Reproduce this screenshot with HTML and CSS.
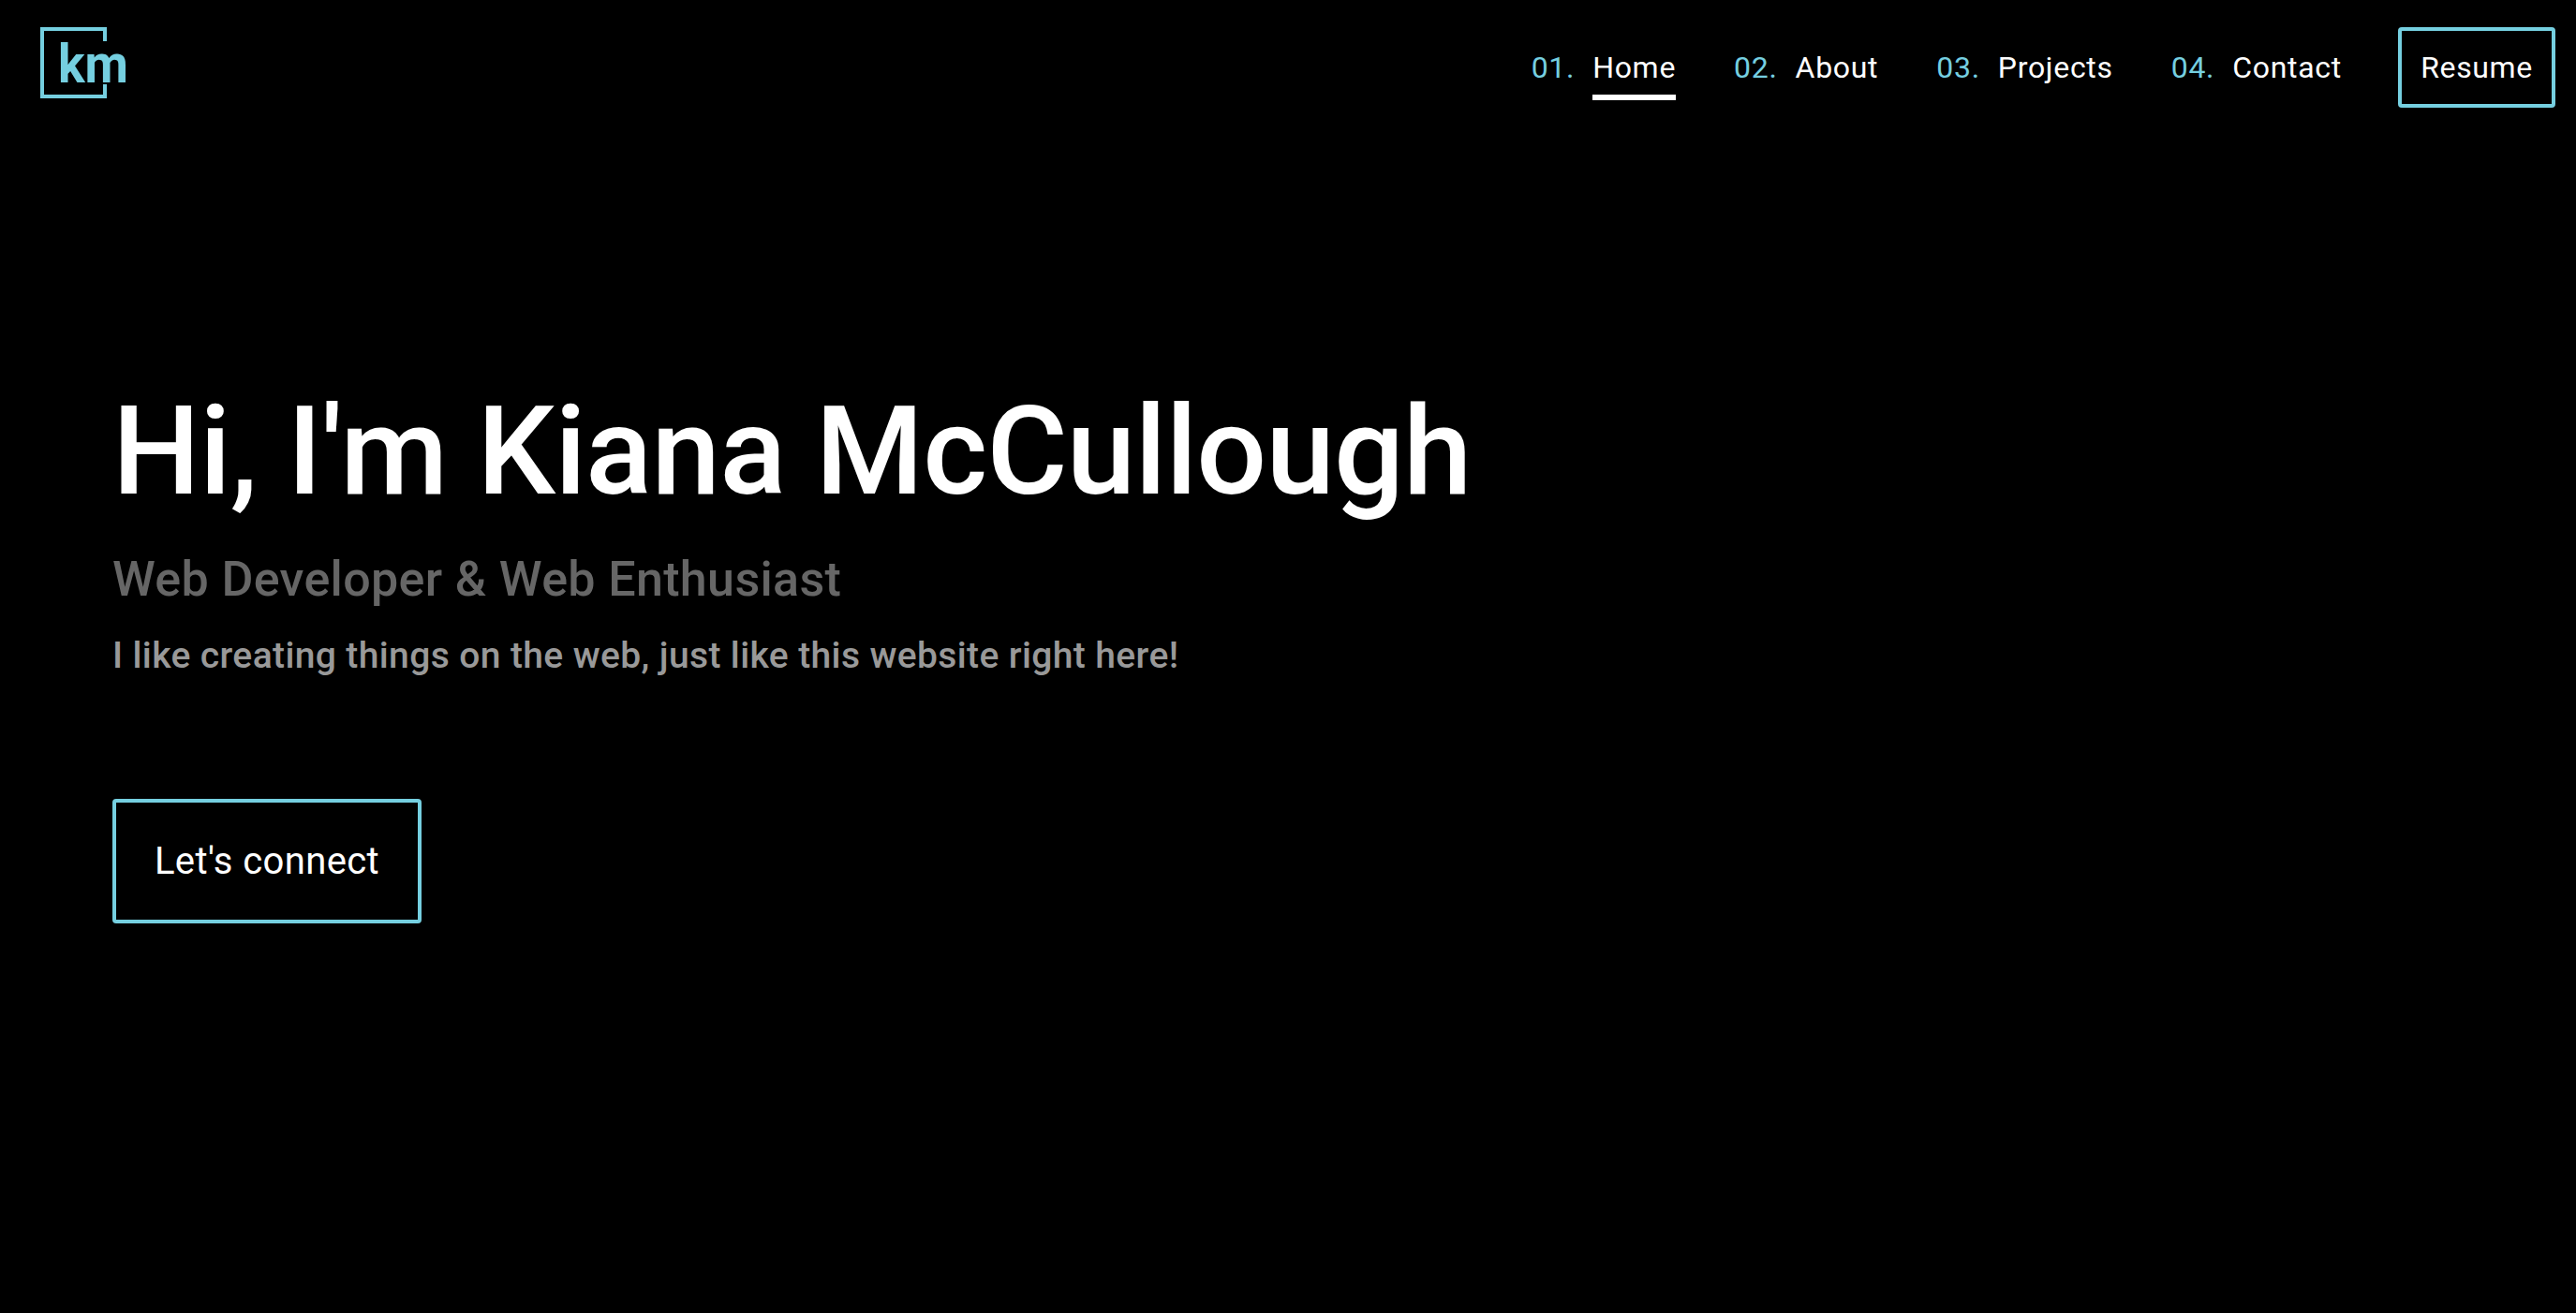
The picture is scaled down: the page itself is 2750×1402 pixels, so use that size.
FILE: index.html
```html
<!DOCTYPE html>
<html lang="en">
<head>
  <meta charset="UTF-8">
  <meta name="viewport" content="width=device-width, initial-scale=1.0">
  <title>Kiana McCullough</title>
  <link rel="stylesheet" href="styles.css">
</head>
<body>
  <header class="navbar">
    <a class="logo" href="#" aria-label="Home">
      <svg width="110" height="80" viewBox="0 0 110 80">
        <path d="M69 15V2H2V74H69V61" fill="none" stroke="#75cfe0" stroke-width="4"/>
        <text x="19" y="59" textLength="75" lengthAdjust="spacingAndGlyphs" class="logo-text">km</text>
      </svg>
    </a>
    <nav class="nav-links">
      <a class="nav-link" href="#"><span class="num">01.</span><span class="label active">Home</span></a>
      <a class="nav-link" href="#"><span class="num">02.</span><span class="label">About</span></a>
      <a class="nav-link" href="#"><span class="num">03.</span><span class="label">Projects</span></a>
      <a class="nav-link" href="#"><span class="num">04.</span><span class="label">Contact</span></a>
      <a class="button resume" href="#">Resume</a>
    </nav>
  </header>

  <main class="hero">
    <h1>Hi, I'm Kiana McCullough</h1>
    <h2>Web Developer &amp; Web Enthusiast</h2>
    <p>I like creating things on the web, just like this website right here!</p>
    <a class="button connect" href="#">Let's connect</a>
  </main>
</body>
</html>
```

FILE: styles.css
```css
html, body {
  height: 100%;
}
body {
  margin: 0;
  background-color: #000;
  color: #fff;
  font-family: Roboto, "Noto Sans", sans-serif;
}
a {
  color: inherit;
  text-decoration: none;
}

/* Top bar */
.navbar {
  display: flex;
  justify-content: space-between;
  align-items: flex-start;
  padding: 29px 22px 0 43px;
}
.logo {
  display: block;
  height: 80px;
}
.logo-text {
  font-family: Roboto, sans-serif;
  font-size: 57px;
  font-weight: 700;
  fill: #75cfe0;
}
.nav-links {
  display: flex;
  align-items: flex-start;
}
.nav-link {
  display: flex;
  gap: 19px;
  margin-right: 62px;
  font-size: 32px;
  line-height: 86px;
  letter-spacing: 0.7px;
}
.nav-link:nth-child(4) {
  margin-right: 60px;
}
.num {
  color: #75cfe0;
}
.label {
  height: 72px;
}
.label.active {
  border-bottom: 6px solid #fff;
}
.button {
  display: block;
  box-sizing: border-box;
  border: 4px solid #75cfe0;
  border-radius: 4px;
}
.resume {
  width: 168px;
  height: 86px;
  font-size: 32px;
  line-height: 78px;
  text-align: center;
  letter-spacing: 0.6px;
}

/* Hero */
.hero {
  padding: 277px 0 0 120px;
}
h1 {
  margin: 0;
  font-size: 132px;
  font-weight: 500;
  line-height: 180px;
  letter-spacing: -0.76px;
}
h2 {
  margin: 12px 0 0;
  font-size: 52px;
  font-weight: 500;
  line-height: 70px;
  color: #666;
  letter-spacing: 0.35px;
}
p {
  margin: 21px 0 0;
  font-size: 39px;
  font-weight: 500;
  line-height: 50px;
  color: #999;
  letter-spacing: 0.38px;
}
.connect {
  width: 330px;
  height: 133px;
  margin-top: 128px;
  font-size: 40px;
  line-height: 125px;
  text-align: center;
  letter-spacing: 0.4px;
}
```
